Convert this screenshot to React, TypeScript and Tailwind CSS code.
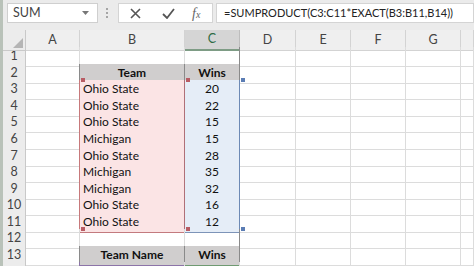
import React from "react";

const cols = "grid grid-cols-[23px_54px_105px_55px_56px_55px_55px_55px_1fr]";
const font = { fontFamily: "Lato, 'Open Sans', sans-serif" };

type CellDef = { text?: string; cls?: string };

function Row({ h, num, cells, numCls }: { h: string; num: string; cells: CellDef[]; numCls?: string }) {
  return (
    <div className={`${cols} ${h}`}>
      <div className={`flex items-center justify-center border-b border-r border-[#c9c9c9] bg-[#ececec] text-[12.5px] text-[#444] ${numCls ?? ""}`}>{num}</div>
      {cells.map((c, i) => (
        <div key={i} className={`flex items-center overflow-hidden whitespace-nowrap border-b border-r text-[12px] text-[#111] ${c.cls ?? "border-[#dcdcdc]"}`}>
          {c.text}
        </div>
      ))}
    </div>
  );
}

const g = "border-[#dcdcdc]";
const blank = (n: number): CellDef[] => Array.from({ length: n }, () => ({ cls: g }));

const teams: [string, string][] = [
  ["Ohio State", "20"],
  ["Ohio State", "22"],
  ["Ohio State", "15"],
  ["Michigan", "15"],
  ["Ohio State", "28"],
  ["Michigan", "35"],
  ["Michigan", "32"],
  ["Ohio State", "16"],
  ["Ohio State", "12"],
];
const heights = ["h-[17px]", "h-[16px]", "h-[17px]", "h-[17px]", "h-[16px]", "h-[17px]", "h-[16px]", "h-[17px]", "h-[16px]"];

export default function App() {
  return (
    <div className="relative h-[266px] w-[474px] overflow-hidden border-l-[3px] border-[#b9c2b9] bg-white" style={font}>
      {/* formula bar */}
      <div className="flex h-[30px] items-start bg-[#ebebeb] pt-[3px]">
        <div className="ml-[4px] flex h-[20px] w-[91px] shrink-0 items-center justify-between border border-[#cfcfcf] bg-white pl-[5px] pr-[8px] text-[12.5px] text-[#444]">
          <span>SUM</span>
          <svg width="7" height="4" viewBox="0 0 7 4"><path d="M0 0h7L3.5 4z" fill="#777" /></svg>
        </div>
        <div className="ml-[8px] mr-[10px] mt-[5px] flex shrink-0 flex-col gap-[2px]">
          <div className="h-[2px] w-[2px] bg-[#a5a5a5]" />
          <div className="h-[2px] w-[2px] bg-[#a5a5a5]" />
          <div className="h-[2px] w-[2px] bg-[#a5a5a5]" />
        </div>
        <div className="flex h-[20px] w-[95px] shrink-0 items-center border border-[#d4d4d4] bg-white">
          <svg className="ml-[11px]" width="11" height="11" viewBox="0 0 11 11"><path d="M1 1L10 10M10 1L1 10" stroke="#555" strokeWidth="1.6" /></svg>
          <svg className="ml-[21px]" width="13" height="11" viewBox="0 0 13 11"><path d="M1 6L5 10L12 1" stroke="#555" strokeWidth="1.8" fill="none" /></svg>
          <span className="ml-[17px] text-[14px] italic text-[#666]" style={{ fontFamily: "'Liberation Serif', serif" }}>f<span className="text-[10px]">x</span></span>
        </div>
        <div className="ml-[3px] flex h-[20px] min-w-0 flex-1 items-center overflow-hidden whitespace-nowrap border border-[#d4d4d4] bg-white pl-[7px] text-[11px] text-[#222]">
          =SUMPRODUCT(C3:C11*EXACT(B3:B11,B14))
        </div>
      </div>

      {/* column header */}
      <div className={`${cols} h-[17px]`}>
        <div className="relative border-b border-r border-[#c9c9c9] bg-[#ececec]">
          <svg className="absolute bottom-[2px] right-[2px]" width="10" height="10" viewBox="0 0 10 10"><path d="M10 0V10H0z" fill="#b5b5b5" /></svg>
        </div>
        {["A", "B", "C", "D", "E", "F", "G", ""].map((l) => (
          <div
            key={l}
            className={`flex items-center justify-center text-[12.5px] ${
              l === "C"
                ? "border-b-2 border-r border-b-[#7e9c85] border-r-[#bdbdbd] bg-[#d5d5d5] text-[#2e6b44]"
                : "border-b border-r border-[#d3d3d3] bg-[#efefef] text-[#444]"
            }`}
          >
            {l}
          </div>
        ))}
      </div>

      {/* row 1 */}
      <Row h="h-[17px]" num="1" cells={[{ cls: g }, { cls: "border-b-[#8a8a8a] border-r-[#dcdcdc]" }, { cls: "border-b-[#8a8a8a] border-r-[#8a8a8a]" }, ...blank(5)]} />
      {/* row 2 */}
      <Row
        h="h-[16px]"
        num="2"
        cells={[
          { cls: "border-b-[#dcdcdc] border-r-[#8a8a8a]" },
          { text: "Team", cls: "justify-center font-bold bg-[#d0cece] border-b-[#8a7a7c] border-r-[#8a8a8a]" },
          { text: "Wins", cls: "justify-center font-bold bg-[#d0cece] border-b-[#6e7c8c] border-r-[#8a8a8a]" },
          ...blank(5),
        ]}
      />
      {teams.map(([t, w], i) => {
        const last = i === teams.length - 1;
        return (
          <Row
            key={i}
            h={heights[i]}
            num={String(i + 3)}
            cells={[
              { cls: "border-b-[#dcdcdc] border-r-[#c7797b]" },
              { text: t, cls: `pl-[3px] bg-[#fbe4e5] border-r-[#b07078] ${last ? "border-b-[#c37a7e]" : "border-b-[#8f7e80]"}` },
              { text: w, cls: `justify-center bg-[#e5edf7] border-r-[#6d8ab5] ${last ? "border-b-[#7d94b8]" : "border-b-[#76808d]"}` },
              ...blank(5),
            ]}
          />
        );
      })}
      {/* row 12 */}
      <Row h="h-[17px]" num="12" cells={[{ cls: g }, { cls: "border-b-[#8a8a8a] border-r-[#dcdcdc]" }, { cls: "border-b-[#8a8a8a] border-r-[#8a8a8a]" }, ...blank(5)]} />
      {/* row 13 */}
      <Row
        h="h-[16px]"
        num="13"
        cells={[
          { cls: "border-b-[#dcdcdc] border-r-[#8a8a8a]" },
          { text: "Team Name", cls: "justify-center font-bold bg-[#d0cece] border-b-[#8c74a8] border-r-[#8a8a8a]" },
          { text: "Wins", cls: "justify-center font-bold bg-[#d0cece] border-b-[#6f9a72] border-r-[#8a8a8a]" },
          ...blank(5),
        ]}
      />
      <Row h="h-[17px]" num="" cells={[{ cls: "border-b-[#dcdcdc] border-r-[#8c74a8]" }, { cls: "border-b-[#dcdcdc] border-r-[#dcdcdc]" }, ...blank(6)]} />

      {/* range corner handles */}
      <div className="absolute left-[78px] top-[78px] h-[4px] w-[4px] bg-[#b85c64]" />
      <div className="absolute left-[183px] top-[78px] h-[4px] w-[4px] bg-[#b85c64]" />
      <div className="absolute left-[78px] top-[227px] h-[4px] w-[4px] bg-[#b85c64]" />
      <div className="absolute left-[183px] top-[227px] h-[4px] w-[4px] bg-[#b85c64]" />
      <div className="absolute left-[238px] top-[78px] h-[4px] w-[4px] bg-[#5b7db4]" />
      <div className="absolute left-[238px] top-[227px] h-[4px] w-[4px] bg-[#5b7db4]" />
    </div>
  );
}
